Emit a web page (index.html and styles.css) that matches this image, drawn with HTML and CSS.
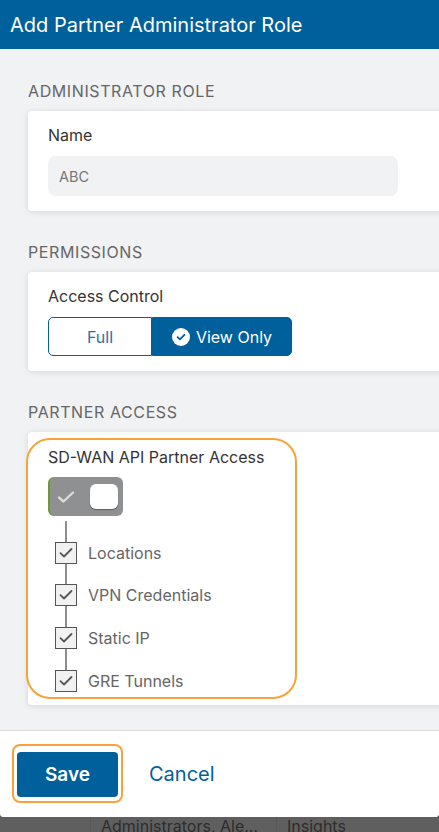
FILE: index.html
```html
<!DOCTYPE html>
<html lang="en">
<head>
    <meta charset="UTF-8">
    <meta name="viewport" content="width=device-width, initial-scale=1.0">
    <title>Add Partner Administrator Role</title>
    <link rel="stylesheet" href="styles.css">
</head>
<body>
    <div class="modal">
        <header class="modal-header">
            <h1>Add Partner Administrator Role</h1>
        </header>
        <main class="modal-body">
            <section class="form-section">
                <h2 class="section-title">ADMINISTRATOR ROLE</h2>
                <div class="card">
                    <label class="field-label">Name</label>
                    <div class="text-input">ABC</div>
                </div>
            </section>
            <section class="form-section">
                <h2 class="section-title">PERMISSIONS</h2>
                <div class="card">
                    <label class="field-label">Access Control</label>
                    <div class="segmented">
                        <button class="seg-btn">Full</button>
                        <button class="seg-btn selected">
                            <svg width="18" height="18" viewBox="0 0 18 18">
                                <circle cx="9" cy="9" r="9" fill="#fff"/>
                                <path d="M5.6 9.2 L7.9 11.4 L12.4 6.8" fill="none" stroke="#00609c" stroke-width="1.8" stroke-linecap="round" stroke-linejoin="round"/>
                            </svg>
                            View Only
                        </button>
                    </div>
                </div>
            </section>
            <section class="form-section">
                <h2 class="section-title">PARTNER ACCESS</h2>
                <div class="card card-flush">
                    <div class="focus-group">
                        <label class="field-label">SD-WAN API Partner Access</label>
                        <div class="toggle">
                            <svg class="toggle-check" width="18" height="14" viewBox="0 0 18 14">
                                <path d="M2 7.5 L6.5 11.5 L16 2.5" fill="none" stroke="#dcdcdc" stroke-width="2.4" stroke-linecap="round" stroke-linejoin="round"/>
                            </svg>
                            <span class="toggle-knob"></span>
                        </div>
                        <ul class="tree">
                            <li class="tree-item"><span class="checkbox"><svg width="14" height="12" viewBox="0 0 14 12"><path d="M1.5 6.2 L5 9.5 L12.5 2" fill="none" stroke="#555" stroke-width="1.8" stroke-linecap="round" stroke-linejoin="round"/></svg></span>Locations</li>
                            <li class="tree-item"><span class="checkbox"><svg width="14" height="12" viewBox="0 0 14 12"><path d="M1.5 6.2 L5 9.5 L12.5 2" fill="none" stroke="#555" stroke-width="1.8" stroke-linecap="round" stroke-linejoin="round"/></svg></span>VPN Credentials</li>
                            <li class="tree-item"><span class="checkbox"><svg width="14" height="12" viewBox="0 0 14 12"><path d="M1.5 6.2 L5 9.5 L12.5 2" fill="none" stroke="#555" stroke-width="1.8" stroke-linecap="round" stroke-linejoin="round"/></svg></span>Static IP</li>
                            <li class="tree-item"><span class="checkbox"><svg width="14" height="12" viewBox="0 0 14 12"><path d="M1.5 6.2 L5 9.5 L12.5 2" fill="none" stroke="#555" stroke-width="1.8" stroke-linecap="round" stroke-linejoin="round"/></svg></span>GRE Tunnels</li>
                        </ul>
                    </div>
                </div>
            </section>
        </main>
        <footer class="modal-footer">
            <span class="focus-ring"><button class="btn-save">Save</button></span>
            <button class="btn-cancel">Cancel</button>
        </footer>
    </div>
    <div class="page-strip">
        <span class="strip-cell strip-gap"></span>
        <span class="strip-cell strip-admins">Administrators, Ale...</span>
        <span class="strip-cell">Insights</span>
    </div>
</body>
</html>
```

FILE: styles.css
```css
* {
    margin: 0;
    padding: 0;
    box-sizing: border-box;
}
html, body {
    height: 100%;
    overflow: hidden;
}
body {
    font-family: Inter, "Noto Sans", sans-serif;
    background-color: #5f5f5f;
    color: #333;
    display: flex;
    flex-direction: column;
}
.modal {
    flex: 1;
    display: flex;
    flex-direction: column;
    background-color: #f1f2f4;
    border-radius: 0 0 4px 4px;
    overflow: hidden;
}
.modal-header {
    background-color: #00609c;
    height: 49px;
    padding: 0 10px;
    display: flex;
    align-items: center;
}
.modal-header h1 {
    color: #fff;
    font-size: 20px;
    font-weight: 400;
}
.modal-body {
    flex: 1;
    padding: 32px 0 0 28px;
    overflow: hidden;
}
.form-section {
    margin-bottom: 31px;
}
.section-title {
    font-size: 16px;
    font-weight: 400;
    color: #666;
    letter-spacing: 0.6px;
    line-height: 20px;
    margin-bottom: 10px;
}
.card {
    background-color: #fff;
    border-radius: 4px 0 0 4px;
    margin-right: -20px;
    padding: 14px 20px 15px;
    box-shadow: 0 1px 6px rgba(0, 0, 0, 0.12);
}
.card-flush {
    padding: 6px 0;
}
.field-label {
    display: block;
    font-size: 16px;
    line-height: 20px;
    color: #333;
}
.text-input {
    margin-top: 11px;
    width: 350px;
    height: 40px;
    background-color: #f1f2f4;
    border-radius: 8px;
    padding: 0 11px;
    display: flex;
    align-items: center;
    font-size: 14.5px;
    color: #777;
}
.segmented {
    margin-top: 11px;
    display: flex;
    width: 244px;
    height: 39px;
}
.seg-btn {
    font-family: inherit;
    font-size: 16px;
    border: 1px solid #00609c;
    background-color: #fff;
    color: #2f6fa6;
    display: flex;
    align-items: center;
    justify-content: center;
    gap: 6px;
    cursor: pointer;
}
.seg-btn:first-child {
    width: 104px;
    border-radius: 5px 0 0 5px;
}
.seg-btn.selected {
    flex: 1;
    background-color: #00609c;
    color: #fff;
    border-radius: 0 5px 5px 0;
}
.focus-group {
    width: 271px;
    margin-left: -2px;
    border: 2px solid #f7a23c;
    border-radius: 24px;
    padding: 7px 20px 5px;
}
.toggle {
    margin-top: 10px;
    width: 75px;
    height: 39px;
    background-color: #8f9092;
    border-left: 2px solid #6d9a2c;
    border-radius: 6px;
    display: flex;
    align-items: center;
    padding: 0 5px 0 7px;
}
.toggle-check {
    margin-right: 15px;
}
.toggle-knob {
    width: 28px;
    height: 25px;
    background-color: #fff;
    border-radius: 6px;
    box-shadow: 0 1px 1px rgba(0, 0, 0, 0.35);
}
.tree {
    list-style: none;
    margin-top: 5px;
    padding-left: 7px;
}
.tree-item {
    display: flex;
    flex-wrap: wrap;
    align-items: center;
    font-size: 16px;
    color: #666;
}
.tree-item::before {
    content: "";
    display: block;
    flex-basis: 100%;
    height: 21px;
    margin-left: 10px;
    border-left: 2px solid #8c8c8c;
}
.tree-item:nth-child(2)::before {
    height: 20px;
}
.checkbox {
    width: 22px;
    height: 22px;
    border: 1px solid #555;
    background-color: #f1f1f2;
    display: flex;
    align-items: center;
    justify-content: center;
    margin-right: 11px;
}
.modal-footer {
    height: 87px;
    background-color: #fff;
    border-top: 1px solid #ddd;
    display: flex;
    align-items: center;
    padding: 0 0 1px 12px;
    gap: 26px;
}
.focus-ring {
    display: inline-flex;
    border: 2px solid #f7a23c;
    border-radius: 8px;
    padding: 6px 3px 4px;
}
.btn-save {
    font-family: inherit;
    width: 101px;
    height: 45px;
    background-color: #00609c;
    color: #fff;
    border: none;
    border-radius: 4px;
    font-size: 19px;
    font-weight: 600;
    cursor: pointer;
}
.btn-cancel {
    font-family: inherit;
    background: none;
    border: none;
    color: #00609c;
    font-size: 20px;
    cursor: pointer;
}
.page-strip {
    height: 15px;
    display: flex;
    overflow: hidden;
    background-color: #5f5f5f;
}
.strip-cell {
    font-size: 16px;
    line-height: 20px;
    color: #2d2d2d;
    padding: 0 10px;
    border-left: 1px solid #585858;
    margin-top: -1px;
}
.strip-gap {
    width: 90px;
    border-left: none;
}
.strip-admins {
    width: 186px;
}
```
